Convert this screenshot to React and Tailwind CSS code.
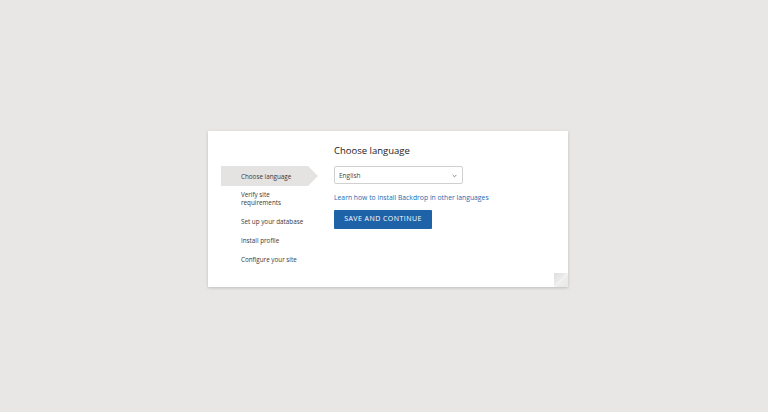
export default function App() {
  const steps = [
    { label: "Choose language", active: true },
    { label: "Verify site requirements", two: true },
    { label: "Set up your database" },
    { label: "Install profile" },
    { label: "Configure your site" },
  ];
  return (
    <div
      className="min-h-[412px] w-full bg-[#e8e7e5] pt-[131px] pl-[208px]"
      style={{ fontFamily: '"Open Sans", "Liberation Sans", sans-serif' }}
    >
      <div className="relative flex h-[156px] w-[360px] bg-white shadow-[0_1px_3px_rgba(0,0,0,0.18)]">
        <ul className="mt-[35px] ml-[13px] w-[97px] shrink-0">
          {steps.map((s) =>
            s.active ? (
              <li key={s.label} className="relative flex h-[20px] w-[87px] items-center bg-[#e4e3e1] pl-[20px] text-[6.3px] leading-[9px] text-[#3a3a3a]">
                {s.label}
                <span className="absolute top-0 right-[-10px] h-0 w-0 border-y-[10px] border-l-[10px] border-y-transparent border-l-[#e4e3e1]" />
              </li>
            ) : (
              <li
                key={s.label}
                className={`w-[66px] py-[5px] pl-[20px] text-[6.3px] text-[#3a3a3a] ${s.two ? "leading-[8px]" : "leading-[9px] whitespace-nowrap"}`}
              >
                {s.label}
              </li>
            )
          )}
        </ul>
        <div className="ml-[16px] pt-[14px]">
          <h1 className="text-[9.5px] leading-[12px] text-[#222]">Choose language</h1>
          <div className="mt-[9px] flex h-[18px] w-[129px] items-center justify-between rounded-[2px] border border-[#d0d0d0] bg-white pt-[1px] pl-[4px] pr-[5px] text-[6.5px] text-[#444]">
            <span>English</span>
            <svg width="5" height="4" viewBox="0 0 5 4" className="text-[#666]">
              <path d="M0.7 1 L2.5 2.8 L4.3 1" fill="none" stroke="currentColor" strokeWidth="0.8" />
            </svg>
          </div>
          <a className="mt-[9px] block text-[6.8px] leading-[9px] text-[#1b6db3] whitespace-nowrap">
            Learn how to install Backdrop in other languages
          </a>
          <button className="mt-[8px] flex h-[19px] w-[98px] items-center justify-center rounded-[1px] bg-[#1e63a8] text-[7px] tracking-[0.45px] text-white">
            SAVE AND CONTINUE
          </button>
        </div>
        <div className="absolute right-0 bottom-0 h-[14px] w-[14px] bg-[linear-gradient(135deg,#dedede_0%,#ececec_48%,#f7f7f7_50%,#eeeeed_52%,#e8e7e5_100%)]" />
      </div>
    </div>
  );
}
